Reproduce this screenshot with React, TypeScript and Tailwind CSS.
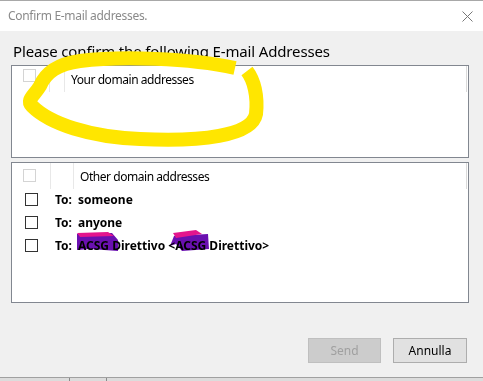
import React from 'react'

const Check = ({ light }: { light?: boolean }) => (
    <div className={`w-[13px] h-[13px] bg-white border ${light ? 'border-[#d4d4d4]' : 'border-[#333333]'}`} />
)

const Header = ({ label, sep1, sep2, top }: { label: string; sep1: number; sep2: number; top: number }) => (
    <div className="flex h-[26px] relative">
        <div className="w-[11px]" />
        <div style={{ width: sep1 - 12, paddingTop: top }}>
            <Check light />
        </div>
        <div className="w-px h-full bg-[#e8e8e8]" />
        <div className="h-full" style={{ width: sep2 - sep1 - 1 }} />
        <div className="w-px h-full bg-[#e8e8e8]" />
        <div className="pl-[6px] pt-[6px] text-[12px] leading-[16px] tracking-[-0.45px] text-[#000]">{label}</div>
        <div className="ml-auto mr-[1px] w-px h-full bg-[#dadada]" />
    </div>
)

const Row = ({ name }: { name: React.ReactNode }) => (
    <div className="flex items-center h-[23px] pl-[13px]">
        <Check />
        <div className="ml-[17px] text-[12px] font-bold text-black whitespace-nowrap">
            <span className="mr-[6px]">To:</span>
            {name}
        </div>
    </div>
)

const Mark = () => (
    <>
        <svg className="absolute left-0 top-0 pointer-events-none" width="483" height="381">
            <path
                d="M247 71 C254 80 258 96 256 114 C252 136 200 142 140 139 C90 137 50 124 32 106 C26 100 34 96 40 86 C46 72 58 64 80 61 C120 56 190 58 235 68"
                fill="none"
                stroke="#ffe600"
                strokeWidth="14"
                strokeLinecap="butt"
            />
        </svg>
        <svg className="absolute left-0 top-0 pointer-events-none mix-blend-multiply" width="483" height="381">
            <path d="M77 234 L112 233 L118 240 L118 251 L90 249 L77 250 Z" fill="#6a10b0" />
            <path d="M77 233 L108 232 L114 236 L80 237 Z" fill="#e4158d" />
            <path d="M174 236 L208 234 L209 249 L182 251 L176 244 L170 246 Z" fill="#6a10b0" />
            <path d="M173 233 L196 230 L202 234 L176 238 Z" fill="#e4158d" />
        </svg>
    </>
)

export default function App() {
    return (
        <div className="w-[483px] h-[381px] relative overflow-hidden bg-[#f0f0f0] font-['Noto_Sans',sans-serif] flex flex-col">
            <div className="h-px bg-[#a8a8a8]" />
            <div className="h-[30px] bg-white flex items-center px-[8px]">
                <span className="text-[12px] tracking-[-0.3px] text-[#8a8a8a]">Confirm E-mail addresses.</span>
                <svg className="ml-auto mr-[2px]" width="11" height="11" viewBox="0 0 11 11">
                    <path d="M0.5 0.5 L10.5 10.5 M10.5 0.5 L0.5 10.5" stroke="#777" strokeWidth="1" />
                </svg>
            </div>
            <div className="flex-1 flex flex-col px-[11px] pt-[10px]">
                <div className="pl-[2px] text-[15px] leading-[20px] tracking-[-0.15px] text-black">Please confirm the following E-mail Addresses</div>
                <div className="mt-[4px] w-[458px] h-[93px] bg-white border border-[#828790]">
                    <Header label="Your domain addresses" sep1={38} sep2={53} top={3} />
                </div>
                <div className="mt-[4px] w-[458px] h-[141px] bg-white border border-[#828790]">
                    <Header label="Other domain addresses" sep1={39} sep2={62} top={6} />
                    <div className="-mt-[1px]">
                        <Row name="someone" />
                        <Row name="anyone" />
                        <Row name="ACSG Direttivo <ACSG Direttivo>" />
                    </div>
                </div>
                <div className="flex justify-end gap-[12px] mt-[35px] pr-[5px]">
                    <div className="w-[73px] h-[25px] flex items-center justify-center bg-[#cccccc] border border-[#bfbfbf] text-[12px] text-[#a0a0a0]">Send</div>
                    <div className="w-[74px] h-[25px] flex items-center justify-center bg-[#e1e1e1] border border-[#adadad] text-[12px] text-black">Annulla</div>
                </div>
            </div>
            <div className="h-px bg-[#a0a0a0]" />
            <div className="h-[3px] bg-[#dcdcdc] flex">
                <div className="w-[69px]" />
                <div className="w-px bg-[#8a8a8a]" />
                <div className="w-[36px]" />
                <div className="w-px bg-[#8a8a8a]" />
            </div>
            <Mark />
        </div>
    )
}
